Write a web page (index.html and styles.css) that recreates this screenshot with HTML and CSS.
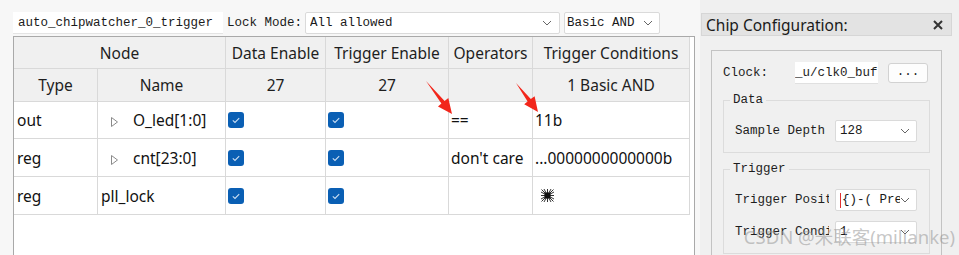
FILE: index.html
```html
<!DOCTYPE html>
<html>
<head>
<meta charset="utf-8">
<link rel="stylesheet" href="styles.css">
</head>
<body>
<div class="app">
  <div class="left">
    <div class="toolbar">
      <div class="tb-input">auto_chipwatcher_0_trigger</div>
      <span class="tb-label">Lock Mode:</span>
      <div class="combo combo-lock"><span class="combo-text">All allowed</span><svg class="chev" width="10" height="6" viewBox="0 0 10 6"><polyline points="1,1 5,5 9,1" fill="none" stroke="#666" stroke-width="1"/></svg></div>
      <div class="combo combo-basic"><span class="combo-text">Basic AND</span><svg class="chev" width="10" height="6" viewBox="0 0 10 6"><polyline points="1,1 5,5 9,1" fill="none" stroke="#666" stroke-width="1"/></svg></div>
    </div>
    <div class="frame">
      <table class="grid">
        <colgroup>
          <col class="c-type"><col class="c-name"><col class="c-de"><col class="c-te"><col class="c-op"><col class="c-tc">
        </colgroup>
        <tr class="h1">
          <th colspan="2">Node</th><th>Data Enable</th><th>Trigger Enable</th><th>Operators</th><th>Trigger Conditions</th>
        </tr>
        <tr class="h2">
          <th>Type</th><th>Name</th><th>27</th><th>27</th><th></th><th>1 Basic AND</th>
        </tr>
        <tr class="r r1">
          <td>out</td>
          <td class="name"><svg class="tri" width="7" height="10" viewBox="0 0 7 10"><polygon points="0.5,0.5 6.5,5 0.5,9.5" fill="none" stroke="#8a8a8a" stroke-width="1"/></svg>O_led[1:0]</td>
          <td class="cb-cell"><svg class="cb" width="16" height="16" viewBox="0 0 16 16"><rect x="0" y="0" width="16" height="16" rx="3" fill="#0a5fb4"/><polyline points="4.8,8.4 7,10.4 11.2,6.2" fill="none" stroke="#cfe0f3" stroke-width="1.1"/></svg></td>
          <td class="cb-cell"><svg class="cb" width="16" height="16" viewBox="0 0 16 16"><rect x="0" y="0" width="16" height="16" rx="3" fill="#0a5fb4"/><polyline points="4.8,8.4 7,10.4 11.2,6.2" fill="none" stroke="#cfe0f3" stroke-width="1.1"/></svg></td>
          <td class="op">==</td>
          <td class="tc">11b</td>
        </tr>
        <tr class="r">
          <td>reg</td>
          <td class="name"><svg class="tri" width="7" height="10" viewBox="0 0 7 10"><polygon points="0.5,0.5 6.5,5 0.5,9.5" fill="none" stroke="#8a8a8a" stroke-width="1"/></svg>cnt[23:0]</td>
          <td class="cb-cell"><svg class="cb" width="16" height="16" viewBox="0 0 16 16"><rect x="0" y="0" width="16" height="16" rx="3" fill="#0a5fb4"/><polyline points="4.8,8.4 7,10.4 11.2,6.2" fill="none" stroke="#cfe0f3" stroke-width="1.1"/></svg></td>
          <td class="cb-cell"><svg class="cb" width="16" height="16" viewBox="0 0 16 16"><rect x="0" y="0" width="16" height="16" rx="3" fill="#0a5fb4"/><polyline points="4.8,8.4 7,10.4 11.2,6.2" fill="none" stroke="#cfe0f3" stroke-width="1.1"/></svg></td>
          <td class="op">don't care</td>
          <td class="tc">...0000000000000b</td>
        </tr>
        <tr class="r">
          <td>reg</td>
          <td class="plain">pll_lock</td>
          <td class="cb-cell"><svg class="cb" width="16" height="16" viewBox="0 0 16 16"><rect x="0" y="0" width="16" height="16" rx="3" fill="#0a5fb4"/><polyline points="4.8,8.4 7,10.4 11.2,6.2" fill="none" stroke="#cfe0f3" stroke-width="1.1"/></svg></td>
          <td class="cb-cell"><svg class="cb" width="16" height="16" viewBox="0 0 16 16"><rect x="0" y="0" width="16" height="16" rx="3" fill="#0a5fb4"/><polyline points="4.8,8.4 7,10.4 11.2,6.2" fill="none" stroke="#cfe0f3" stroke-width="1.1"/></svg></td>
          <td class="op"></td>
          <td class="tc tc-icon"><svg width="13" height="13" viewBox="0 0 13 13"><g stroke="#333" stroke-width="1" fill="none"><line x1="0.5" y1="0.5" x2="12.5" y2="12.5"/><line x1="12.5" y1="0.5" x2="0.5" y2="12.5"/><line x1="6.5" y1="0" x2="6.5" y2="13"/><line x1="0" y1="6.5" x2="13" y2="6.5"/><line x1="3" y1="0" x2="10" y2="13"/><line x1="10" y1="0" x2="3" y2="13"/><line x1="0" y1="3" x2="13" y2="10"/><line x1="0" y1="10" x2="13" y2="3"/></g><rect x="3.5" y="3.5" width="6" height="6" fill="#111"/></svg></td>
        </tr>
      </table>
    </div>
  </div>
  <div class="right">
    <div class="title"><span>Chip Configuration:</span><svg width="10" height="10" viewBox="0 0 10 10"><path d="M1 1 L9 9 M9 1 L1 9" stroke="#333" stroke-width="2" fill="none"/></svg></div>
    <div class="panel">
      <div class="row clock-row">
        <span class="lbl lbl-clock">Clock:</span>
        <div class="clock-input">_u/clk0_buf</div>
        <div class="btn">...</div>
      </div>
      <fieldset class="group">
        <legend>Data</legend>
        <div class="row">
          <span class="lbl">Sample Depth</span>
          <div class="combo pcombo"><span class="combo-text">128</span><svg class="chev" width="10" height="6" viewBox="0 0 10 6"><polyline points="1,1 5,5 9,1" fill="none" stroke="#666" stroke-width="1"/></svg></div>
        </div>
      </fieldset>
      <fieldset class="group">
        <legend>Trigger</legend>
        <div class="row">
          <span class="lbl">Trigger Position</span>
          <div class="combo pcombo"><span class="caret"></span><span class="combo-text">{)-( Pre Pos</span><svg class="chev" width="10" height="6" viewBox="0 0 10 6"><polyline points="1,1 5,5 9,1" fill="none" stroke="#666" stroke-width="1"/></svg></div>
        </div>
        <div class="row row-gap">
          <span class="lbl">Trigger Condition</span>
          <div class="combo pcombo"><span class="combo-text">1</span><svg class="chev" width="10" height="6" viewBox="0 0 10 6"><polyline points="1,1 5,5 9,1" fill="none" stroke="#666" stroke-width="1"/></svg></div>
        </div>
      </fieldset>
    </div>
  </div>
  <svg class="arrows" width="959" height="255" viewBox="0 0 959 255">
    <polygon points="426,81 444.6,101 448.3,98 452,114 438,106.4 441.4,103.6" fill="#f2261b"/>
    <polygon points="516,83 530.8,99 534.6,96.2 538,112 524.2,104.2 527.6,101.6" fill="#f2261b"/>
  </svg>
  <div class="watermark">CSDN @米联客(milianke)</div>
</div>
</body>
</html>
```
FILE: styles.css
```css
* { box-sizing: border-box; }
body {
  margin: 0;
  background: #f7f7f7;
  font-family: "Noto Sans", "Noto Sans CJK SC", sans-serif;
  color: #1a1a1a;
}
.app {
  position: relative;
  display: flex;
  width: 959px;
  height: 255px;
  overflow: hidden;
}
.left {
  flex: none;
  width: 700px;
  padding: 12px 0 0 13px;
}
.toolbar {
  display: flex;
  align-items: center;
  height: 22px;
  margin-bottom: 2px;
  font-family: "Liberation Mono", monospace;
  font-size: 12.5px;
  color: #1a1a1a;
}
.tb-input {
  width: 210px;
  height: 22px;
  line-height: 22px;
  background: #fff;
  border-bottom: 1px solid #e4e4e4;
  padding-left: 5px;
}
.tb-label {
  width: 78px;
  margin-left: 4px;
  white-space: nowrap;
}
.combo {
  display: flex;
  align-items: center;
  height: 22px;
  background: #fff;
  border: 1px solid #dadada;
  border-radius: 2px;
  font-family: "Liberation Mono", monospace;
  font-size: 12.5px;
  color: #1a1a1a;
}
.combo-text {
  flex: 1;
  overflow: hidden;
  white-space: nowrap;
}
.combo-lock { width: 255px; padding: 0 7px 0 4px; }
.combo-basic { width: 96px; margin-left: 4px; padding: 0 6px 0 2px; }
.chev { flex: none; }

.frame {
  width: 682px;
  height: 220px;
  background: #fff;
  border: 1px solid #a9a9a9;
  border-bottom: none;
}
.grid {
  width: 676px;
  table-layout: fixed;
  border-collapse: separate;
  border-spacing: 0;
  font-size: 15.5px;
}
.c-type { width: 84px; }
.c-name { width: 128px; }
.c-de { width: 100px; }
.c-te { width: 123px; }
.c-op { width: 84px; }
.c-tc { width: 157px; }
.grid th, .grid td {
  border-right: 1px solid #d9d9d9;
  border-bottom: 1px solid #d9d9d9;
  padding: 0;
  white-space: nowrap;
  overflow: hidden;
}
.grid th {
  background: #f0f0f0;
  font-weight: 400;
  text-align: center;
  color: #1e1e1e;
}
.h1 { height: 32px; }
.h2 { height: 33px; }
.r { height: 38px; }
.r1 { height: 37px; }
.grid td { padding-left: 3px; color: #111; }
.grid td.name { padding-left: 13px; }
.tri { margin-right: 15px; vertical-align: -1px; }
.grid td.cb-cell { padding-left: 2px; }
.cb { display: block; }
.grid td.op { padding-left: 2px; }
.grid td.tc { padding-left: 2px; }
.grid td.tc-icon { padding-left: 8px; }
.tc-icon svg { display: block; }

.right {
  flex: none;
  width: 259px;
  background: #f0f0f0;
  padding-top: 13px;
}
.title {
  display: flex;
  align-items: center;
  justify-content: space-between;
  width: 251px;
  height: 23px;
  margin-left: 1px;
  padding: 0 8px 0 4px;
  background: #e3e3e3;
  border: 1px solid #d6d6d6;
  font-size: 15.5px;
  color: #1a1a1a;
}
.panel {
  width: 231px;
  height: 220px;
  margin: 14px 0 0 11px;
  padding: 11px 11px 0;
  border: 1px solid #c3c3c3;
  border-bottom: none;
  font-family: "Liberation Mono", monospace;
  font-size: 12.5px;
  color: #1e1e1e;
}
.row {
  display: flex;
  align-items: center;
  height: 22px;
}
.lbl {
  width: 94px;
  margin-right: 6px;
  flex: none;
  overflow: hidden;
  white-space: nowrap;
}
.lbl-clock { width: 72px; margin-right: 0; }
.clock-input {
  width: 83px;
  height: 22px;
  line-height: 22px;
  background: #fff;
  border-bottom: 1px solid #e0e0e0;
  overflow: hidden;
  white-space: nowrap;
}
.btn {
  width: 40px;
  height: 20px;
  margin-left: 10px;
  line-height: 17px;
  text-align: center;
  background: #fdfdfd;
  border: 1px solid #d2d2d2;
  border-radius: 3px;
}
.group {
  margin: 7px 0 0;
  padding: 11px 11px 10px 6px;
  border: 1px solid #dcdcdc;
  min-width: 0;
}
.group legend {
  padding: 0 3px;
  line-height: 18px;
}
.group .row { margin-left: 5px; }
.group .row-gap { margin-top: 10px; }
.pcombo {
  width: 82px;
  padding: 0 6px 0 4px;
}
.caret {
  width: 1px;
  height: 15px;
  background: #e03030;
  margin-right: 1px;
  flex: none;
}
.arrows {
  position: absolute;
  left: 0;
  top: 0;
  pointer-events: none;
}
.watermark {
  position: absolute;
  right: 4px;
  top: 226px;
  font-family: "Noto Sans", "Noto Sans CJK SC", sans-serif;
  font-size: 18.5px;
  line-height: 22px;
  color: rgba(150, 150, 150, 0.55);
  pointer-events: none;
}
```
